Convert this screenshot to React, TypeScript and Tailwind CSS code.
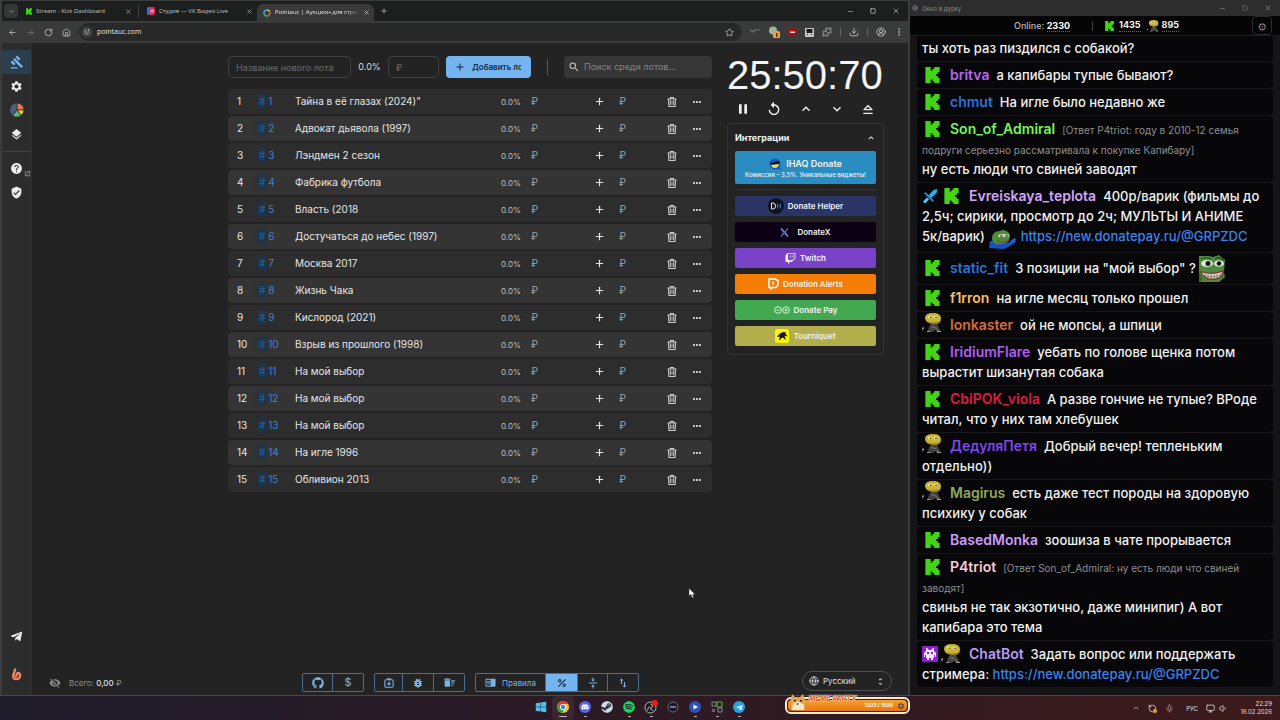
import React from 'react'
import {
    ArrowLeft, ArrowRight, ChevronDown, ChevronUp, CircleUserRound, Download, EllipsisVertical,
    Globe, House, Mic, Minus, Plus, Puzzle, RotateCw, Square, Star, Volume1, X, Monitor, RefreshCcw,
} from 'lucide-react'
import {
    MdAdd, MdBugReport, MdChromeReaderMode, MdDeleteSweep, MdGavel, MdHelp, MdKeyboardArrowDown,
    MdKeyboardArrowUp, MdLayers, MdMoreHoriz, MdOpenInNew, MdPause, MdPercent, MdReplay, MdSearch,
    MdSettings, MdSwapVert, MdTune, MdUnfoldMore, MdVerifiedUser, MdVerticalAlignCenter, MdVisibilityOff,
} from 'react-icons/md'
import { FaDiscord, FaGithub, FaSpotify, FaSteam, FaTelegramPlane, FaTwitch, FaWindows } from 'react-icons/fa'

const lots = [
    'Тайна в её глазах (2024)"',
    'Адвокат дьявола (1997)',
    'Лэндмен 2 сезон',
    'Фабрика футбола',
    'Власть (2018',
    'Достучаться до небес (1997)',
    'Москва 2017',
    'Жизнь Чака',
    'Кислород (2021)',
    'Взрыв из прошлого (1998)',
    'На мой выбор',
    'На мой выбор',
    'На мой выбор',
    'На игле 1996',
    'Обливион 2013',
]

function KickIcon({ className }: { className?: string }) {
    return (
        <svg viewBox="1 0 22 24" className={className} fill="#43d317" aria-hidden="true">
            <path d="M1.333 0h8v5.333H12V2.667h2.667V0h8v8H20v2.667h-2.667v2.666H20V16h2.667v8h-8v-2.667H12v-2.666H9.333V24h-8z" />
        </svg>
    )
}

function MaskIcon({ className }: { className?: string }) {
    return (
        <svg viewBox="0 0 20 20" className={className} aria-hidden="true">
            <path d="M6 19q0-7 5-9l4 1 4 8h-4l-2-2-2 2z" fill="#45413f" />
            <path d="M0 15l2-1-1 4z" fill="#b9b4a8" />
            <path d="M11 13l6 5M9 13l3 2" stroke="#77716d" strokeWidth="1" />
            <path d="M5 18.500h3M15 18.500h4" stroke="#a09a92" strokeWidth="1" />
            <path d="M3 5q0-5 8-5 8 0 8 5.500T12 11Q3 10 3 5z" fill="#c9b32c" />
            <path d="M4 8q7 3 14.500 0-2 3-6.500 3-6-.5-8-3z" fill="#8f7d18" />
            <ellipse cx="8" cy="4" rx="2.200" ry="1.400" fill="#efe6a4" />
            <ellipse cx="13.500" cy="4" rx="2.200" ry="1.400" fill="#efe6a4" />
            <circle cx="8.500" cy="4.200" r=".8" fill="#222" />
            <circle cx="14" cy="4.200" r=".8" fill="#222" />
        </svg>
    )
}

function SwordIcon() {
    return (
        <svg viewBox="0 0 16 16" className="size-4" aria-hidden="true">
            <path d="M15.500 1l-1 4-6.500 6-2.500-2.500L11.500 2z" fill="#22b4f0" />
            <path d="M2 5.500L3.500 4 12 12.500 10.500 14z" fill="#1b86d0" />
            <path d="M5 9.500l2 2-4 4L1 13.500z" fill="#45d2fb" />
        </svg>
    )
}

function BotIcon() {
    return (
        <svg viewBox="0 0 16 16" className="size-4" aria-hidden="true">
            <rect width="16" height="16" rx="1" fill="#8d1fd0" />
            <path d="M4 2h1l2 2h2l2-2h1v3l2 2v4h-1v-2h-1v3h-1v2h-2v-2H7v2H5v-2H4V9H3v2H2V7l2-2z" fill="#f6e8ff" />
            <path d="M5 6h2v2H5zM9 6h2v2H9z" fill="#8d1fd0" />
        </svg>
    )
}

function PepeHugEmote() {
    return (
        <svg viewBox="0 0 27 19" className="inline-block w-[27px] h-[19px] mx-px align-[-8px]" aria-label="emote">
            <path d="M0 18l1-7 5 0 5 3 10-2 5-2 1 2-6 4-6 3z" fill="#1652c4" />
            <path d="M3 9q0-8 8-8 3-2 6 0 4 1 4 6-1 7-9 7-8 1-9-5z" fill="#4d8c3a" />
            <path d="M9 5l5-1 6 1-1 2-9 0z" fill="#d9e2cf" />
            <path d="M11 5.500h3v1h-3zM16 5.500h3v1h-3z" fill="#18240f" />
            <path d="M8 10q6 3 12-1v2q-6 3-12 1z" fill="#8d4434" />
            <path d="M21 11l5-3 1 2-4 3z" fill="#1d64e4" />
        </svg>
    )
}

function PepeGrinEmote() {
    return (
        <svg viewBox="0 0 27 27" className="inline-block w-[27px] h-[27px] -my-px ml-[3px] align-[-8px]" aria-label="emote">
            <path d="M0 1h10l4 1 6-2 6 5-1 12 1 5-6 5H0z" fill="#4f8a3c" />
            <path d="M0 17l4 8-4 2zM20 3l6 4-2 3z" fill="#37682a" />
            <ellipse cx="8" cy="8.500" rx="6" ry="3.500" fill="#dfe5d8" />
            <ellipse cx="20" cy="8.500" rx="5" ry="3.200" fill="#dfe5d8" />
            <circle cx="9" cy="8.500" r="2.500" fill="#10160c" />
            <circle cx="20" cy="8.500" r="2.300" fill="#10160c" />
            <path d="M2 4q5-3 10 0M16 4q5-3 9 1" stroke="#25481b" strokeWidth="1.200" fill="none" />
            <path d="M1 16q12 4 24-1 0 10-11 10Q3 25 1 16z" fill="#7d3a2a" />
            <path d="M3 17.500q10 3 20-.5 0 6-9 6.500-9 0-11-6z" fill="#e6e2d4" />
            <path d="M6 18v4M9 19v4M12 19v4.500M15 19v4.500M18 19v4M21 18v3M4 20.500q9 3 18 0" stroke="#6f6a5e" strokeWidth=".8" fill="none" />
        </svg>
    )
}

function Kick() {
    return <KickIcon className="w-[15px] h-4 ml-[3px]" />
}

function Mask() {
    return <MaskIcon className="size-5 shrink-0" />
}

const chatLink = (
    <a href="#donate" className="text-[#3f82e8]">https://new.donatepay.ru/@GRPZDC</a>
)

type Message = {
    name?: string
    color?: string
    badges?: React.ReactNode[]
    reply?: string
    text: React.ReactNode
}

const messages: Message[] = [
    { text: 'ты хоть раз пиздился с собакой?' },
    { name: 'britva', color: 'text-[#b565f5]', badges: [<Kick />], text: 'а капибары тупые бывают?' },
    { name: 'chmut', color: 'text-[#2a74dc]', badges: [<Kick />], text: 'На игле было недавно же' },
    {
        name: 'Son_of_Admiral', color: 'text-[#72f55a]', badges: [<Kick />],
        reply: '[Ответ P4triot: году в 2010-12 семья подруги серьезно рассматривала к покупке Капибару]',
        text: 'ну есть люди что свиней заводят',
    },
    {
        name: 'Evreiskaya_teplota', color: 'text-[#d3a4fa]', badges: [<SwordIcon />, <Kick />],
        text: <>400р/варик (фильмы до 2,5ч; сирики, просмотр до 2ч; МУЛЬТЫ И АНИМЕ <span className="whitespace-nowrap">5к/варик)</span> <PepeHugEmote /> {chatLink}</>,
    },
    { name: 'static_fit', color: 'text-[#2f72d6]', badges: [<Kick />], text: <>3 позиции на "мой выбор" ?<PepeGrinEmote /></> },
    { name: 'f1rron', color: 'text-[#f8bf62]', badges: [<Kick />], text: 'на игле месяц только прошел' },
    { name: 'lonkaster', color: 'text-[#d96c38]', badges: [<Mask />], text: 'ой не мопсы, а шпици' },
    { name: 'IridiumFlare', color: 'text-[#b25cf2]', badges: [<Kick />], text: 'уебать по голове щенка потом вырастит шизанутая собака' },
    { name: 'CbiPOK_viola', color: 'text-[#dc1c40]', badges: [<Kick />], text: 'А разве гончие не тупые? ВРоде читал, что у них там хлебушек' },
    { name: 'ДедуляПетя', color: 'text-[#7c48e8]', badges: [<Mask />], text: 'Добрый вечер! тепленьким отдельно))' },
    { name: 'Magirus', color: 'text-[#8fa75c]', badges: [<Mask />], text: 'есть даже тест породы на здоровую психику у собак' },
    { name: 'BasedMonka', color: 'text-[#cf9cf8]', badges: [<Kick />], text: 'зоошиза в чате прорывается' },
    {
        name: 'P4triot', color: 'text-[#fbc9d3]', badges: [<Kick />],
        reply: '[Ответ Son_of_Admiral: ну есть люди что свиней заводят]',
        text: 'свинья не так экзотично, даже минипиг) А вот капибара это тема',
    },
    { name: 'ChatBot', color: 'text-[#b79cf7]', badges: [<BotIcon />, <Mask />], text: <>Задать вопрос или поддержать стримера: {chatLink}</> },
]

function TabStrip() {
    return (
        <div className="flex items-center h-5 pl-[2px] pr-2 bg-[#1c1f1e] text-[6px] text-[#c4c7c5]">
            <button aria-label="Поиск вкладок" className="flex items-center justify-center size-3.5 rounded bg-[#353736]"><ChevronDown size={7} /></button>
            <div className="flex items-center w-[121px] h-3.5 pl-2 pr-1.5 gap-1 border-r border-[#3c3e3d]">
                <KickIcon className="w-[6px] h-[7px]" />
                <span className="flex-1 whitespace-nowrap">Stream - Kick Dashboard</span>
                <button aria-label="Закрыть"><X size={7} /></button>
            </div>
            <div className="flex items-center w-[118px] h-3.5 pl-2 pr-1 gap-1">
                <svg viewBox="0 0 8 8" className="size-2"><rect width="8" height="8" rx="2" fill="#f0254f" /><path d="M0 2a2 2 0 012-2v8a2 2 0 01-2-2z" fill="#2f6fe8" /><path d="M3.500 2.500h3v3h-3z" fill="#f7a3b6" /></svg>
                <span className="flex-1 whitespace-nowrap">Студия — VK Видео Live</span>
                <button aria-label="Закрыть"><X size={7} /></button>
            </div>
            <div className="flex items-center self-end w-[117px] h-[17px] pl-1.5 pr-1 gap-1 rounded-t-md bg-[#3a3a3a] text-[#e8e8e8]">
                <svg viewBox="0 0 8 8" className="size-2 shrink-0" fill="none" strokeWidth="1.600">
                    <path d="M4 1a3 3 0 012.600 1.500" stroke="#f2c230" /><path d="M6.600 2.500A3 3 0 015.500 6.600" stroke="#e4572e" />
                    <path d="M5.500 6.600A3 3 0 011.400 5.500" stroke="#35b56b" /><path d="M1.400 5.500A3 3 0 014 1" stroke="#36a9e0" />
                </svg>
                <span className="flex-1 overflow-hidden whitespace-nowrap mask-r-from-85%">Pointauc | Аукцион для стримеров</span>
                <button aria-label="Закрыть"><X size={7} /></button>
            </div>
            <button aria-label="Новая вкладка" className="ml-[6px]"><Plus size={8} /></button>
            <div className="flex items-center ml-auto gap-4">
                <button aria-label="Свернуть"><Minus size={7} /></button>
                <button aria-label="Развернуть"><Square size={6} strokeWidth={3} /></button>
                <button aria-label="Закрыть окно"><X size={8} /></button>
            </div>
        </div>
    )
}

function AddressBar() {
    return (
        <div className="flex items-center h-[22px] pl-1 pr-1 gap-2 bg-[#3a3a3a] text-[#c7c7c7]">
            <div className="flex items-center gap-[9px] pl-[2px]">
                <button aria-label="Назад"><ArrowLeft size={9} /></button>
                <button aria-label="Вперёд" className="text-[#777]"><ArrowRight size={9} /></button>
                <button aria-label="Обновить"><RotateCw size={9} /></button>
                <button aria-label="Домой"><House size={9} /></button>
            </div>
            <div className="flex items-center flex-1 h-[18px] px-[2px] pr-2 gap-1 rounded-full bg-[#282828]">
                <span className="flex items-center justify-center size-3 rounded-full bg-[#3a3a3a]"><MdTune size={8} /></span>
                <input aria-label="Адрес" defaultValue="pointauc.com" className="flex-1 min-w-0 bg-transparent text-[7px] text-[#e3e3e3] outline-none" />
                <button aria-label="В закладки"><Star size={9} /></button>
            </div>
            <div className="flex items-center gap-2">
                <svg viewBox="0 0 10 8" className="w-[10px] h-2" fill="none" stroke="#777"><path d="M0 1l2 3 2-2h6M4 2v3" /></svg>
                <svg viewBox="0 0 12 12" className="size-3"><circle cx="5" cy="4.500" r="4" fill="#9fb5a4" /><rect x="5" y="5" width="7" height="7" rx="1.500" fill="#f0a33a" /><path d="M8 7h1.500v4H8z" fill="#5a3200" /></svg>
                <svg viewBox="0 0 9 9" className="size-[9px]"><path d="M0 1l4-1 5 1v4L5 9 0 6z" fill="#a80e17" /><path d="M2 3.500h5v1.500H2z" fill="#f3d3d3" /></svg>
                <svg viewBox="0 0 9 9" className="size-[9px]"><rect width="9" height="9" rx="1" fill="#c9c9c9" /><path d="M1.500 1h6v4h-6z" fill="#1b1b1b" /><path d="M2 6h1v1H2zM6 6h1v1H6z" fill="#111" /></svg>
                <Puzzle size={10} />
                <span className="w-px h-2 bg-[#666]" />
                <Download size={10} />
                <span className="w-px h-2 bg-[#666]" />
                <CircleUserRound size={10} />
                <EllipsisVertical size={10} />
            </div>
        </div>
    )
}

function Sidebar() {
    return (
        <nav className="flex flex-col items-center w-[30px] shrink-0 pt-[7px] bg-[#2c2c2c] border-r border-[#303030] text-[#ececec]">
            <a href="#auction" aria-label="Аукцион" className="flex items-center justify-center w-full h-6 bg-[#2b3e4e] text-[#79b5ee]"><MdGavel size={14} /></a>
            <a href="#settings" aria-label="Настройки" className="flex items-center justify-center w-full h-6"><MdSettings size={13} /></a>
            <a href="#wheel" aria-label="Колесо" className="flex items-center justify-center w-full h-6">
                <svg viewBox="0 0 14 14" className="size-[14px]" stroke="#2c2c2c" strokeWidth=".7">
                    <path d="M7 7V0a7 7 0 017 7z" fill="#ee7752" /><path d="M7 7h7a7 7 0 01-3 5.500z" fill="#f0c24b" />
                    <path d="M7 7l4 5.500a7 7 0 01-8.500 0z" fill="#5cb874" /><path d="M7 7l-4.500 5.500A7 7 0 017 0z" fill="#4d5f80" />
                </svg>
            </a>
            <a href="#overlays" aria-label="Оверлеи" className="flex items-center justify-center w-full h-6"><MdLayers size={13} /></a>
            <hr className="w-full mt-[5px] mb-[4px] border-[#404040]" />
            <a href="#help" aria-label="Помощь" className="relative flex items-center justify-center w-full h-6">
                <MdHelp size={13} />
                <MdOpenInNew size={7} className="absolute right-0 bottom-[3px] text-[#a5a5a5]" />
            </a>
            <a href="#privacy" aria-label="Безопасность" className="flex items-center justify-center w-full h-6"><MdVerifiedUser size={13} /></a>
            <a href="#telegram" aria-label="Telegram" className="flex items-center justify-center w-full h-6 mt-auto"><FaTelegramPlane size={13} /></a>
            <a href="#boosty" aria-label="Boosty" className="flex items-center justify-center w-full h-6 mt-3.5 mb-[9px]">
                <svg viewBox="0 0 12 14" className="w-[11px] h-[13px]" fill="none" stroke="#f2855f" strokeWidth="2.600" strokeLinecap="round" strokeLinejoin="round">
                    <path d="M4.500 1.500L2.500 8q-.5 4 3 4 4 0 4.500-3.500Q10 5 7 5.500L5.500 9" />
                </svg>
            </a>
        </nav>
    )
}

function LotForm() {
    return (
        <form className="flex items-center h-[22px] text-[9px]">
            <input aria-label="Название нового лота" placeholder="Название нового лота" className="w-[123px] shrink-0 h-full px-[7px] rounded-sm border border-[#404040] bg-transparent placeholder:text-[#6b6b6b]" />
            <span className="w-[37px] shrink-0 text-center text-[#dadada]">0.0%</span>
            <input aria-label="Стоимость" placeholder="₽" className="w-[51px] shrink-0 h-full px-[7px] rounded-sm border border-[#404040] bg-transparent placeholder:text-[#6b6b6b]" />
            <button type="button" className="flex items-center w-[85px] shrink-0 h-full ml-[7px] pl-2 pr-2.5 gap-1.5 rounded-sm bg-[#74b5f1] text-[#16283c] font-semibold">
                <MdAdd size={12} className="shrink-0" />
                <span className="overflow-hidden whitespace-nowrap text-[8px]">Добавить лот</span>
            </button>
            <span className="w-px h-4 mx-4 shrink-0 bg-[#5a5a5a]" />
            <label className="flex items-center flex-1 min-w-0 h-full pl-1 gap-1 rounded-sm bg-[#363636] text-[#c9c9c9]">
                <MdSearch size={12} className="shrink-0" />
                <input aria-label="Поиск" placeholder="Поиск среди лотов..." className="flex-1 min-w-0 bg-transparent placeholder:text-[#858585] outline-none" />
            </label>
        </form>
    )
}

function TrashIcon() {
    return (
        <svg viewBox="0 0 12 12" className="size-3" fill="none" stroke="currentColor" strokeWidth="1.200" aria-hidden="true">
            <path d="M1.500 3h9M4.500 3V1.500h3V3M2.500 3l.5 7.500h6L9.500 3" />
            <path d="M4.500 4.500V9M6 4.500V9M7.500 4.500V9" strokeWidth=".8" />
        </svg>
    )
}

function LotTable() {
    return (
        <table className="w-full mt-[9px] table-fixed border-separate border-spacing-x-0 border-spacing-y-[2px] text-left text-[10px] text-[#e6e6e6]">
            <colgroup>
                <col className="w-[30px]" />
                <col className="w-9" />
                <col />
                <col className="w-[93px]" />
                <col className="w-[65px]" />
                <col className="w-[26px]" />
                <col className="w-[27px]" />
            </colgroup>
            <tbody>
                {lots.map((lot, i) => (
                    <tr key={i} className="h-[25px] bg-[#2d2d2d] even:bg-[#343434]">
                        <td className="pl-[9px] rounded-l">{i + 1}</td>
                        <td className="pl-px text-[#3a85cf]"><span className="rounded bg-[#203448] text-[#1f629f] shadow-[0_0_3px_2px_#203448]">#</span> {i + 1}</td>
                        <td className="pl-px truncate">{lot}</td>
                        <td>
                            <div className="flex items-center gap-2.5">
                                <span className="w-5 text-[8px] text-[#c0c0c0]">0.0%</span>
                                <input aria-label={'Сумма лота ' + (i + 1)} placeholder="₽" className="w-10 bg-transparent placeholder:text-[#a0a0a0] outline-none" />
                            </div>
                        </td>
                        <td>
                            <div className="flex items-center gap-3.5">
                                <button aria-label="Добавить"><Plus size={11} strokeWidth={2.5} /></button>
                                <input aria-label={'Прибавить к лоту ' + (i + 1)} placeholder="₽" className="w-6 bg-transparent placeholder:text-[#a0a0a0] outline-none" />
                            </div>
                        </td>
                        <td><button aria-label="Удалить" className="flex mx-auto text-[#cfcfcf]"><TrashIcon /></button></td>
                        <td className="rounded-r"><button aria-label="Ещё" className="flex ml-1.5"><MdMoreHoriz size={12} /></button></td>
                    </tr>
                ))}
            </tbody>
        </table>
    )
}

function Timer() {
    return (
        <div>
            <div className="font-['Liberation_Sans',sans-serif] text-[40px] leading-[38px] text-[#f4f4f4]">25:50:70</div>
            <div className="flex justify-between mt-[7px] px-2 text-[#f0f0f0]">
                <button aria-label="Пауза"><MdPause size={16} /></button>
                <button aria-label="Сбросить"><MdReplay size={16} /></button>
                <button aria-label="Добавить время"><MdKeyboardArrowUp size={16} /></button>
                <button aria-label="Убавить время"><MdKeyboardArrowDown size={16} /></button>
                <button aria-label="Максимум">
                    <svg viewBox="0 0 24 24" className="size-4" fill="none" stroke="currentColor" strokeWidth="2"><path d="M5 18.500h14M5.500 13.500L12 7l6.500 6.500M8 13h8" /></svg>
                </button>
            </div>
        </div>
    )
}

const services = [
    {
        name: 'Donate Helper', className: 'bg-[#2b3467]',
        icon: <svg viewBox="0 0 16 16" className="size-4"><circle cx="8" cy="8" r="8" fill="#0e1320" /><path d="M3.500 5v6h1.500q2.500 0 2.500-3T5 5z" fill="none" stroke="#e8e8f0" /><path d="M9.500 5.500v5M12.500 5.500v5M9.500 8h3" stroke="#3b6fb0" /></svg>,
    },
    {
        name: 'DonateX', className: 'bg-[#0c0015]',
        icon: <svg viewBox="0 0 9 9" className="size-[9px] mr-1" fill="none"><path d="M1 .5l7 8" stroke="#6683e0" strokeWidth="1.800" /><path d="M8 .5l-7 8" stroke="#4d68c8" strokeWidth="1.200" /></svg>,
    },
    { name: 'Twitch', className: 'bg-[#7a42c9]', icon: <FaTwitch size={11} /> },
    {
        name: 'Donation Alerts', className: 'bg-[#f57d07]',
        icon: <svg viewBox="0 0 11 12" className="w-[11px] h-3" fill="none" stroke="#fff" strokeWidth="1.500"><path d="M1 1h6l3 1.500v4.500L8 9.500H4.500L3 11V9.500H1z" /><path d="M5 3.500v3" /></svg>,
    },
    {
        name: 'Donate Pay', className: 'bg-[#43a951]',
        icon: <svg viewBox="0 0 16 8" className="w-4 h-2" fill="none" stroke="#d8f2dc"><circle cx="4" cy="4" r="3.300" /><circle cx="12" cy="4" r="3.300" /><path d="M2.500 4h3M10.500 4h3M12 2.500v3" /></svg>,
    },
    {
        name: 'Tourniquet', className: 'bg-[#b1ae4b]',
        icon: <svg viewBox="0 0 14 14" className="size-[14px]"><rect width="14" height="14" rx="2.500" fill="#f9f504" /><path d="M2 7.500l3-3 3-1.500 3 .5-.5 1.500 2 2-1 .5-2-1 .5 2 1 2h-1L8 8.500 6.500 9 5 11H4l1-3.500L3 8z" fill="#17160a" /></svg>,
    },
]

function Integrations() {
    return (
        <section className="mt-1.5 px-[7px] pb-2 rounded border border-[#353535] text-[8px] font-semibold text-[#f2f2f2]">
            <button className="flex items-center justify-between w-full h-[27px] text-[9px] font-bold">
                Интеграции
                <MdKeyboardArrowUp size={10} />
            </button>
            <button className="flex flex-col items-center justify-center w-full h-[33px] rounded-xs bg-[#2a8dc1]">
                <span className="flex items-center gap-1 text-[9px] leading-[14px]">
                    <svg viewBox="0 0 13 12" className="w-[13px] h-3"><circle cx="6" cy="6" r="5.500" fill="#1757c9" /><path d="M1 5l10-2-1 3-8 1z" fill="#111" /><path d="M2 7l8-1q-1 4-4 4T2 7z" fill="#f3e04c" /><path d="M9 8l4 4-4-1z" fill="#1757c9" /></svg>
                    IHAQ Donate
                </span>
                <span className="text-[6px] leading-2 font-medium whitespace-nowrap">Комиссия – 3,5%. Уникальные виджеты!</span>
            </button>
            <hr className="mt-[5px] mb-1.5 border-[#353535]" />
            <div className="flex flex-col gap-1.5">
                {services.map((s) => (
                    <button key={s.name} className={'flex items-center justify-center gap-1 w-full h-5 rounded-xs ' + s.className}>
                        {s.icon}
                        {s.name}
                    </button>
                ))}
            </div>
        </section>
    )
}

function Footer() {
    return (
        <footer className="grid grid-cols-[1fr_auto_1fr] items-center mt-auto pl-[17px] pr-4 pb-px text-[8px] text-[#79b3e8]">
            <div className="flex items-center gap-2 text-[#8a8a8a]">
                <MdVisibilityOff size={12} />
                <span>Всего: <b className="font-medium text-[#e0e0e0]">0,00</b> ₽</span>
            </div>
            <div className="flex gap-2.5">
                <div className="flex h-[19px] rounded-xs border border-[#4c6f90] divide-x divide-[#4c6f90]">
                    <button aria-label="GitHub" className="flex items-center justify-center w-[30px]"><FaGithub size={12} /></button>
                    <button aria-label="Поддержать" className="w-[30px] text-[11px]">$</button>
                </div>
                <div className="flex h-[19px] rounded-xs border border-[#4c6f90] divide-x divide-[#4c6f90]">
                    <button aria-label="Сохранить" className="flex items-center justify-center w-7">
                        <svg viewBox="0 0 12 12" className="size-[10px]" fill="none" stroke="currentColor" strokeWidth="1.300"><rect x="1" y="2" width="10" height="9" rx="1.500" /><path d="M3.500 1h5M6 4v4.500M4 6.500l2 2 2-2" /></svg>
                    </button>
                    <button aria-label="Сообщить об ошибке" className="flex items-center justify-center w-[31px]"><MdBugReport size={12} /></button>
                    <button aria-label="Очистить" className="flex items-center justify-center w-[30px]"><MdDeleteSweep size={13} /></button>
                </div>
                <div className="flex h-[19px] rounded-xs border border-[#4c6f90] divide-x divide-[#4c6f90]">
                    <button className="flex items-center justify-center w-[70px] gap-1.5"><MdChromeReaderMode size={11} className="-scale-x-100" />Правила</button>
                    <button aria-label="Проценты" className="flex items-center justify-center w-8 bg-[#74b5f1] text-[#1b2b3b]"><MdPercent size={12} /></button>
                    <button aria-label="Сжать" className="flex items-center justify-center w-[30px]"><MdVerticalAlignCenter size={12} /></button>
                    <button aria-label="Сортировка" className="flex items-center justify-center w-[30px]"><MdSwapVert size={12} /></button>
                </div>
            </div>
            <button className="flex items-center justify-self-end w-[90px] h-5 px-1.5 gap-1 mb-[3px] rounded-full border border-[#505050] text-[#e0e0e0]">
                <Globe size={10} />
                Русский
                <MdUnfoldMore size={9} className="ml-auto" />
            </button>
        </footer>
    )
}

function Chat() {
    return (
        <aside className="flex flex-col w-[370px] shrink-0 min-h-0 overflow-hidden bg-[#151517] text-[#f1f1f1]">
            <div className="flex items-center shrink-0 h-4 pl-0.5 pr-2 gap-1 bg-[#2d2d2d] text-[6px] text-[#8b8b8b]">
                <Globe size={6} />
                <span>Окно в дурку</span>
                <span className="flex items-center ml-auto gap-4">
                    <Minus size={7} /><Square size={6} /><X size={8} />
                </span>
            </div>
            <header className="flex items-center shrink-0 h-5 pl-[104px] pr-2 bg-[#050506] border-b border-[#1d1d1f] text-[9px] leading-3 font-bold">
                <span className="font-medium text-[#b9b9b9]">Online: <b className="border-b border-dotted border-[#666] text-white">2330</b></span>
                <span className="w-px h-2.5 ml-[22px] mr-[12px] bg-[#3c3c3c]" />
                <KickIcon className="w-[9px] h-2.5 mr-[5px]" />
                <span className="border-b border-dotted border-[#666]">1435</span>
                <MaskIcon className="size-3 ml-1.5 mr-[3px]" />
                <span className="border-b border-dotted border-[#666]">895</span>
                <button aria-label="Настройки чата" className="flex items-center justify-center w-5 h-[19px] ml-auto rounded-sm border border-[#2b2b2e] text-[10px] font-normal text-[#b0b0b0]">⊙</button>
            </header>
            <div className="flex flex-col flex-1 justify-end min-h-0 gap-px px-[7px] pb-2 overflow-hidden">
                {messages.map((m, i) => (
                    <div key={i} className="shrink-0 px-[5px] py-[3px] rounded-sm bg-[#070709] text-[13px] leading-5 font-medium">
                        {m.badges && (
                            <span className="inline-flex h-4 mr-[9px] align-[-3px]">
                                {m.badges.map((badge, j) => (
                                    <span key={j} className="flex items-center w-[19px]">{badge}</span>
                                ))}
                            </span>
                        )}
                        {m.name && <span className={'mr-[7px] text-[14px] leading-none font-semibold ' + m.color}>{m.name}</span>}
                        {m.reply && <span className="text-[10px] leading-none font-normal text-[#8e8e92]">{m.reply}<br /></span>}
                        {m.text}
                    </div>
                ))}
            </div>
        </aside>
    )
}

const apps = [
    { name: 'Пуск', icon: <FaWindows size={12} className="text-[#4cc2f1]" /> },
    {
        name: 'Chrome', open: true, active: true,
        icon: <svg viewBox="0 0 24 24" className="size-3"><circle cx="12" cy="12" r="12" fill="#f7c21c" /><path d="M1.600 6A12 12 0 0122.400 6H12a6 6 0 00-5.200 9z" fill="#e33b2e" /><path d="M1.600 6l5.200 9A6 6 0 0012 18l-1 6A12 12 0 011.600 6z" fill="#27a348" /><circle cx="12" cy="12" r="6" fill="#fff" /><circle cx="12" cy="12" r="4.500" fill="#3f82ee" /></svg>,
    },
    { name: 'Discord', open: true, icon: <span className="flex items-center justify-center size-3 rounded-full bg-[#5865f2]"><FaDiscord size={8} className="text-white" /></span> },
    { name: 'Steam', icon: <FaSteam size={12} className="text-[#c9dcea]" /> },
    { name: 'Spotify', open: true, icon: <FaSpotify size={12} className="text-[#1ed760]" /> },
    {
        name: 'OBS', open: true,
        icon: <svg viewBox="0 0 14 14" className="size-[14px]"><circle cx="6.500" cy="7.500" r="5.500" fill="#161616" stroke="#bdbdbd" /><path d="M6.500 4a2 2 0 010 4M4 10a2 2 0 012-3M9.500 10a2 2 0 01-3-2" fill="none" stroke="#bdbdbd" /><circle cx="11" cy="3" r="3" fill="#f01919" /></svg>,
    },
    { name: 'Плеер', icon: <svg viewBox="0 0 12 12" className="size-3"><circle cx="6" cy="6" r="5" fill="#17171f" stroke="#6e6b80" /><path d="M3 5h6v2H3z" fill="#77749a" /></svg> },
    { name: 'Видео', open: true, icon: <svg viewBox="0 0 12 12" className="size-3"><circle cx="6" cy="6" r="6" fill="#2d4fc4" /><path d="M4.500 3.500L9 6 4.500 8.500z" fill="#fff" /></svg> },
    { name: 'Монтаж', open: true, icon: <svg viewBox="0 0 12 12" className="size-3" fill="none"><path d="M1 1h4v4H1zM7 7h4v4H7z" stroke="#7d8b93" /><path d="M6 1h5v5H6z" stroke="#63b53c" /><path d="M1 8l3 3M1 11l3-3" stroke="#8fa3ad" /></svg> },
    { name: 'Telegram', open: true, icon: <span className="flex items-center justify-center size-3 rounded-full bg-[#2ba2df]"><FaTelegramPlane size={7} className="text-white" /></span> },
]

function Taskbar() {
    return (
        <div className="grid grid-cols-[1fr_auto_1fr] items-center shrink-0 h-[25px] border-t border-[#4b4748] bg-linear-to-r from-[#1f1c2b] via-[#2c1a24] to-[#3d1a1b]">
            <span />
            <div className="flex">
                {apps.map((app) => (
                    <button key={app.name} aria-label={app.name} className={'flex flex-col items-center w-[22px] h-6 pt-1 rounded-sm ' + (app.active ? 'bg-[#3a2630]' : '')}>
                        <span className="flex items-center justify-center h-3.5">{app.icon}</span>
                        {app.open && <span className={'h-px mt-[2px] rounded-full bg-[#c9b7bd] ' + (app.active ? 'w-2' : 'w-[3px]')} />}
                    </button>
                ))}
            </div>
            <div className="flex items-center justify-self-end pr-2 gap-2 text-[6px] text-[#e3dcdc]">
                <ChevronUp size={8} />
                <span className="relative">
                    <RefreshCcw size={9} />
                    <span className="absolute right-0 bottom-0 size-1 rounded-full bg-[#f09a20]" />
                </span>
                <Mic size={9} className="text-[#9c8f90]" />
                <span className="ml-1">РУС</span>
                <span className="flex gap-1"><Monitor size={9} /><Volume1 size={9} /></span>
                <span className="w-9 text-right leading-2">22:29<br />16.02.2026</span>
            </div>
        </div>
    )
}

function MemeParty() {
    return (
        <div className="absolute bottom-[6px] right-[370px] w-[125px] h-[17px] p-px rounded-md border-2 border-[#f4ead8] bg-[#3a1f12]">
            <div className="flex items-center justify-end h-full pr-0.5 gap-1 rounded-sm bg-linear-to-b from-[#f9a12e] to-[#e5760f] text-[5px] font-bold text-white">
                <span>1325 / 1500</span>
                <MdSettings size={8} className="text-[#5a5552]" />
            </div>
            <svg viewBox="0 0 16 18" className="absolute left-[3px] bottom-px w-4 h-[18px]" aria-hidden="true">
                <path d="M1 17V6l1-5 3 3h5l3-3 2 6v10z" fill="#e3a552" />
                <path d="M2 17l1-6 3-3 5 2 3 2v5z" fill="#f6e7cb" />
                <path d="M4 7h2v1.500H4zM10 7h2v1.500h-2zM6 10.500h3L7.500 12z" fill="#2b1b12" />
            </svg>
            <span className="absolute -top-1 left-[22px] text-[7px] leading-2 italic font-extrabold whitespace-nowrap text-[#e0661c] [text-shadow:0_0_1px_#fff,0_0_1px_#fff,0_0_1px_#fff]">MEME PARTY</span>
        </div>
    )
}

export default function App() {
    return (
        <div className="relative flex flex-col h-screen overflow-hidden bg-[#232323] font-['Inter','Noto_Sans',sans-serif] text-[#e6e6e6]">
            <div className="flex flex-1 min-h-0">
                <div className="flex flex-col flex-1 min-w-0 border-t border-x-2 border-[#3b3d3d]">
                    <div className="font-['Open_Sans','Noto_Sans',sans-serif]">
                        <TabStrip />
                        <AddressBar />
                    </div>
                    <div className="flex flex-1 min-h-0">
                        <Sidebar />
                        <main className="flex flex-col flex-1 min-w-0 pt-[13px]">
                            <div className="flex items-start pl-[196px] pr-6 gap-[15px]">
                                <div className="flex-1 min-w-0">
                                    <LotForm />
                                    <LotTable />
                                </div>
                                <div className="w-[157px] shrink-0">
                                    <Timer />
                                    <Integrations />
                                </div>
                            </div>
                            <Footer />
                        </main>
                    </div>
                </div>
                <Chat />
            </div>
            <Taskbar />
            <MemeParty />
            <svg viewBox="0 0 8 12" className="absolute left-[53.8%] top-[81.6%] w-[7px] h-[11px]" aria-hidden="true">
                <path d="M0 0v9l2-2 2 4 1.500-1L4 7h3z" fill="#fff" stroke="#111" strokeWidth=".5" />
            </svg>
        </div>
    )
}
